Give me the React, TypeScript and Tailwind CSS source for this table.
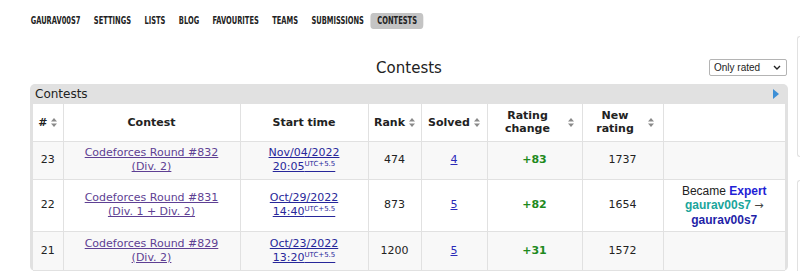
import React from "react";

const NAV = ["GAURAV00S7", "SETTINGS", "LISTS", "BLOG", "FAVOURITES", "TEAMS", "SUBMISSIONS", "CONTESTS"];

const ROWS = [
  { n: 23, c1: "Codeforces Round #832", c2: "(Div. 2)", d: "Nov/04/2022", t: "20:05", rank: 474, solved: 4, delta: "+83", rating: 1737, note: false, bg: "bg-[#f8f8f8]", h: "h-[38px]" },
  { n: 22, c1: "Codeforces Round #831", c2: "(Div. 1 + Div. 2)", d: "Oct/29/2022", t: "14:40", rank: 873, solved: 5, delta: "+82", rating: 1654, note: true, bg: "bg-white", h: "h-[52px]" },
  { n: 21, c1: "Codeforces Round #829", c2: "(Div. 2)", d: "Oct/23/2022", t: "13:20", rank: 1200, solved: 5, delta: "+31", rating: 1572, note: false, bg: "bg-[#f8f8f8]", h: "h-[39px]" },
];

function SortArrows() {
  return (
    <svg width="6" height="9" viewBox="0 0 6 9" className="inline-block shrink-0">
      <path d="M3 0 L6 3.5 L0 3.5 Z" fill="#8a8a8a" />
      <path d="M3 9 L6 5.5 L0 5.5 Z" fill="#8a8a8a" />
    </svg>
  );
}

export default function App() {
  return (
    <div className="w-[800px] h-[271px] overflow-hidden bg-white flex text-[#222] font-['DejaVu_Sans',Verdana,sans-serif]">
      <div className="w-[758px] ml-[30px] shrink-0">
        <nav className="mt-[13px] h-[16px] flex items-center -ml-[6px] origin-left scale-x-[0.745] font-['DejaVu_Sans_Condensed','DejaVu_Sans',sans-serif] font-bold text-[10px] text-[#222]">
          {NAV.map((item) => (
            <span
              key={item}
              className={`px-[9px] h-[16px] leading-[16px] rounded-[4px] ${item === "CONTESTS" ? "bg-[#c4c4c4]" : ""}`}
            >
              {item}
            </span>
          ))}
        </nav>

        <div className="mt-[28px] grid grid-cols-[1fr_auto_1fr] items-center h-[16px]">
          <div />
          <div className="text-[15px] leading-[20px] pt-[1px]">Contests</div>
          <div className="justify-self-end mr-[1px]">
            <div className="w-[78px] h-[17px] border border-[#b4b4b4] rounded-[2px] flex items-center justify-between pl-[4px] pr-[5px] text-[10px] font-['Liberation_Sans',Arial,sans-serif] text-[#222]">
              <span>Only rated</span>
              <svg width="8" height="5" viewBox="0 0 8 5">
                <path d="M1 1 L4 4 L7 1" stroke="#222" strokeWidth="1.4" fill="none" />
              </svg>
            </div>
          </div>
        </div>

        <div className="mt-[11px] bg-[#e1e1e1] rounded-[5px] px-[3px]">
          <div className="h-[20px] flex items-center justify-between pl-[2px] pr-[6px]">
            <span className="text-[12px] leading-[20px]">Contests</span>
            <svg width="6" height="10" viewBox="0 0 6 10">
              <path d="M0 0 L6 5 L0 10 Z" fill="#3d8fd6" />
            </svg>
          </div>
          <table className="w-[752px] table-fixed border-collapse bg-white text-[11px]">
            <colgroup>
              <col className="w-[30px]" />
              <col className="w-[177px]" />
              <col className="w-[128px]" />
              <col className="w-[53px]" />
              <col className="w-[66px]" />
              <col className="w-[95px]" />
              <col className="w-[81px]" />
              <col className="w-[122px]" />
            </colgroup>
            <thead>
              <tr className="h-[37px] font-bold text-[11px] leading-[13px]">
                <th className="border-r border-b border-[#e1e1e1]">
                  <span className="inline-flex items-center gap-[4px]"># <SortArrows /></span>
                </th>
                <th className="border-r border-b border-[#e1e1e1]">Contest</th>
                <th className="border-r border-b border-[#e1e1e1]">Start time</th>
                <th className="border-r border-b border-[#e1e1e1]">
                  <span className="inline-flex items-center gap-[4px]">Rank <SortArrows /></span>
                </th>
                <th className="border-r border-b border-[#e1e1e1]">
                  <span className="inline-flex items-center gap-[4px]">Solved <SortArrows /></span>
                </th>
                <th className="border-r border-b border-[#e1e1e1]">
                  <div className="flex items-center pr-[8px]">
                    <span className="flex-1 text-center">Rating<br />change</span>
                    <SortArrows />
                  </div>
                </th>
                <th className="border-r border-b border-[#e1e1e1]">
                  <div className="flex items-center pr-[9px]">
                    <span className="flex-1 text-center">New<br />rating</span>
                    <SortArrows />
                  </div>
                </th>
                <th className="border-b border-[#e1e1e1]" />
              </tr>
            </thead>
            <tbody>
              {ROWS.map((r) => (
                <tr key={r.n} className={`${r.bg} ${r.h} text-center leading-[14px]`}>
                  <td className="border-r border-b border-[#e1e1e1]">{r.n}</td>
                  <td className="border-r border-b border-[#e1e1e1]">
                    <a className="text-[#5e3f93] underline">
                      {r.c1}
                      <br />
                      {r.c2}
                    </a>
                  </td>
                  <td className="border-r border-b border-[#e1e1e1]">
                    <a className="text-[#27279a] underline">
                      {r.d}
                      <br />
                      {r.t}
                      <span className="text-[7px] leading-none relative -top-[4px]">UTC+5.5</span>
                    </a>
                  </td>
                  <td className="border-r border-b border-[#e1e1e1]">{r.rank}</td>
                  <td className="border-r border-b border-[#e1e1e1]">
                    <a className="text-[#2a2ab8] underline">{r.solved}</a>
                  </td>
                  <td className="border-r border-b border-[#e1e1e1] font-bold text-[#1e8a1e]">{r.delta}</td>
                  <td className="border-r border-b border-[#e1e1e1]">{r.rating}</td>
                  <td className="border-b border-[#e1e1e1] font-['Liberation_Sans',Arial,sans-serif] text-[12px] leading-[14px]">
                    {r.note && (
                      <>
                        Became <span className="font-bold text-[#1f1fd6]">Expert</span>
                        <br />
                        <span className="font-bold text-[#1aa59b]">gaurav00s7</span>{" "}
                        <span className="font-['DejaVu_Sans',sans-serif] text-[11px] text-[#444]">→</span>
                        <br />
                        <span className="font-bold text-[#1f1fa8]">gaurav00s7</span>
                      </>
                    )}
                  </td>
                </tr>
              ))}
            </tbody>
          </table>
        </div>
      </div>

      <div className="ml-[9px] flex-1 flex flex-col">
        <div className="mt-[36px] h-[121px] border-l border-t border-b border-[#e1e1e1] rounded-l-[5px]" />
        <div className="mt-[23px] flex-1 border-l border-t border-[#e1e1e1] rounded-tl-[5px]" />
      </div>
    </div>
  );
}
